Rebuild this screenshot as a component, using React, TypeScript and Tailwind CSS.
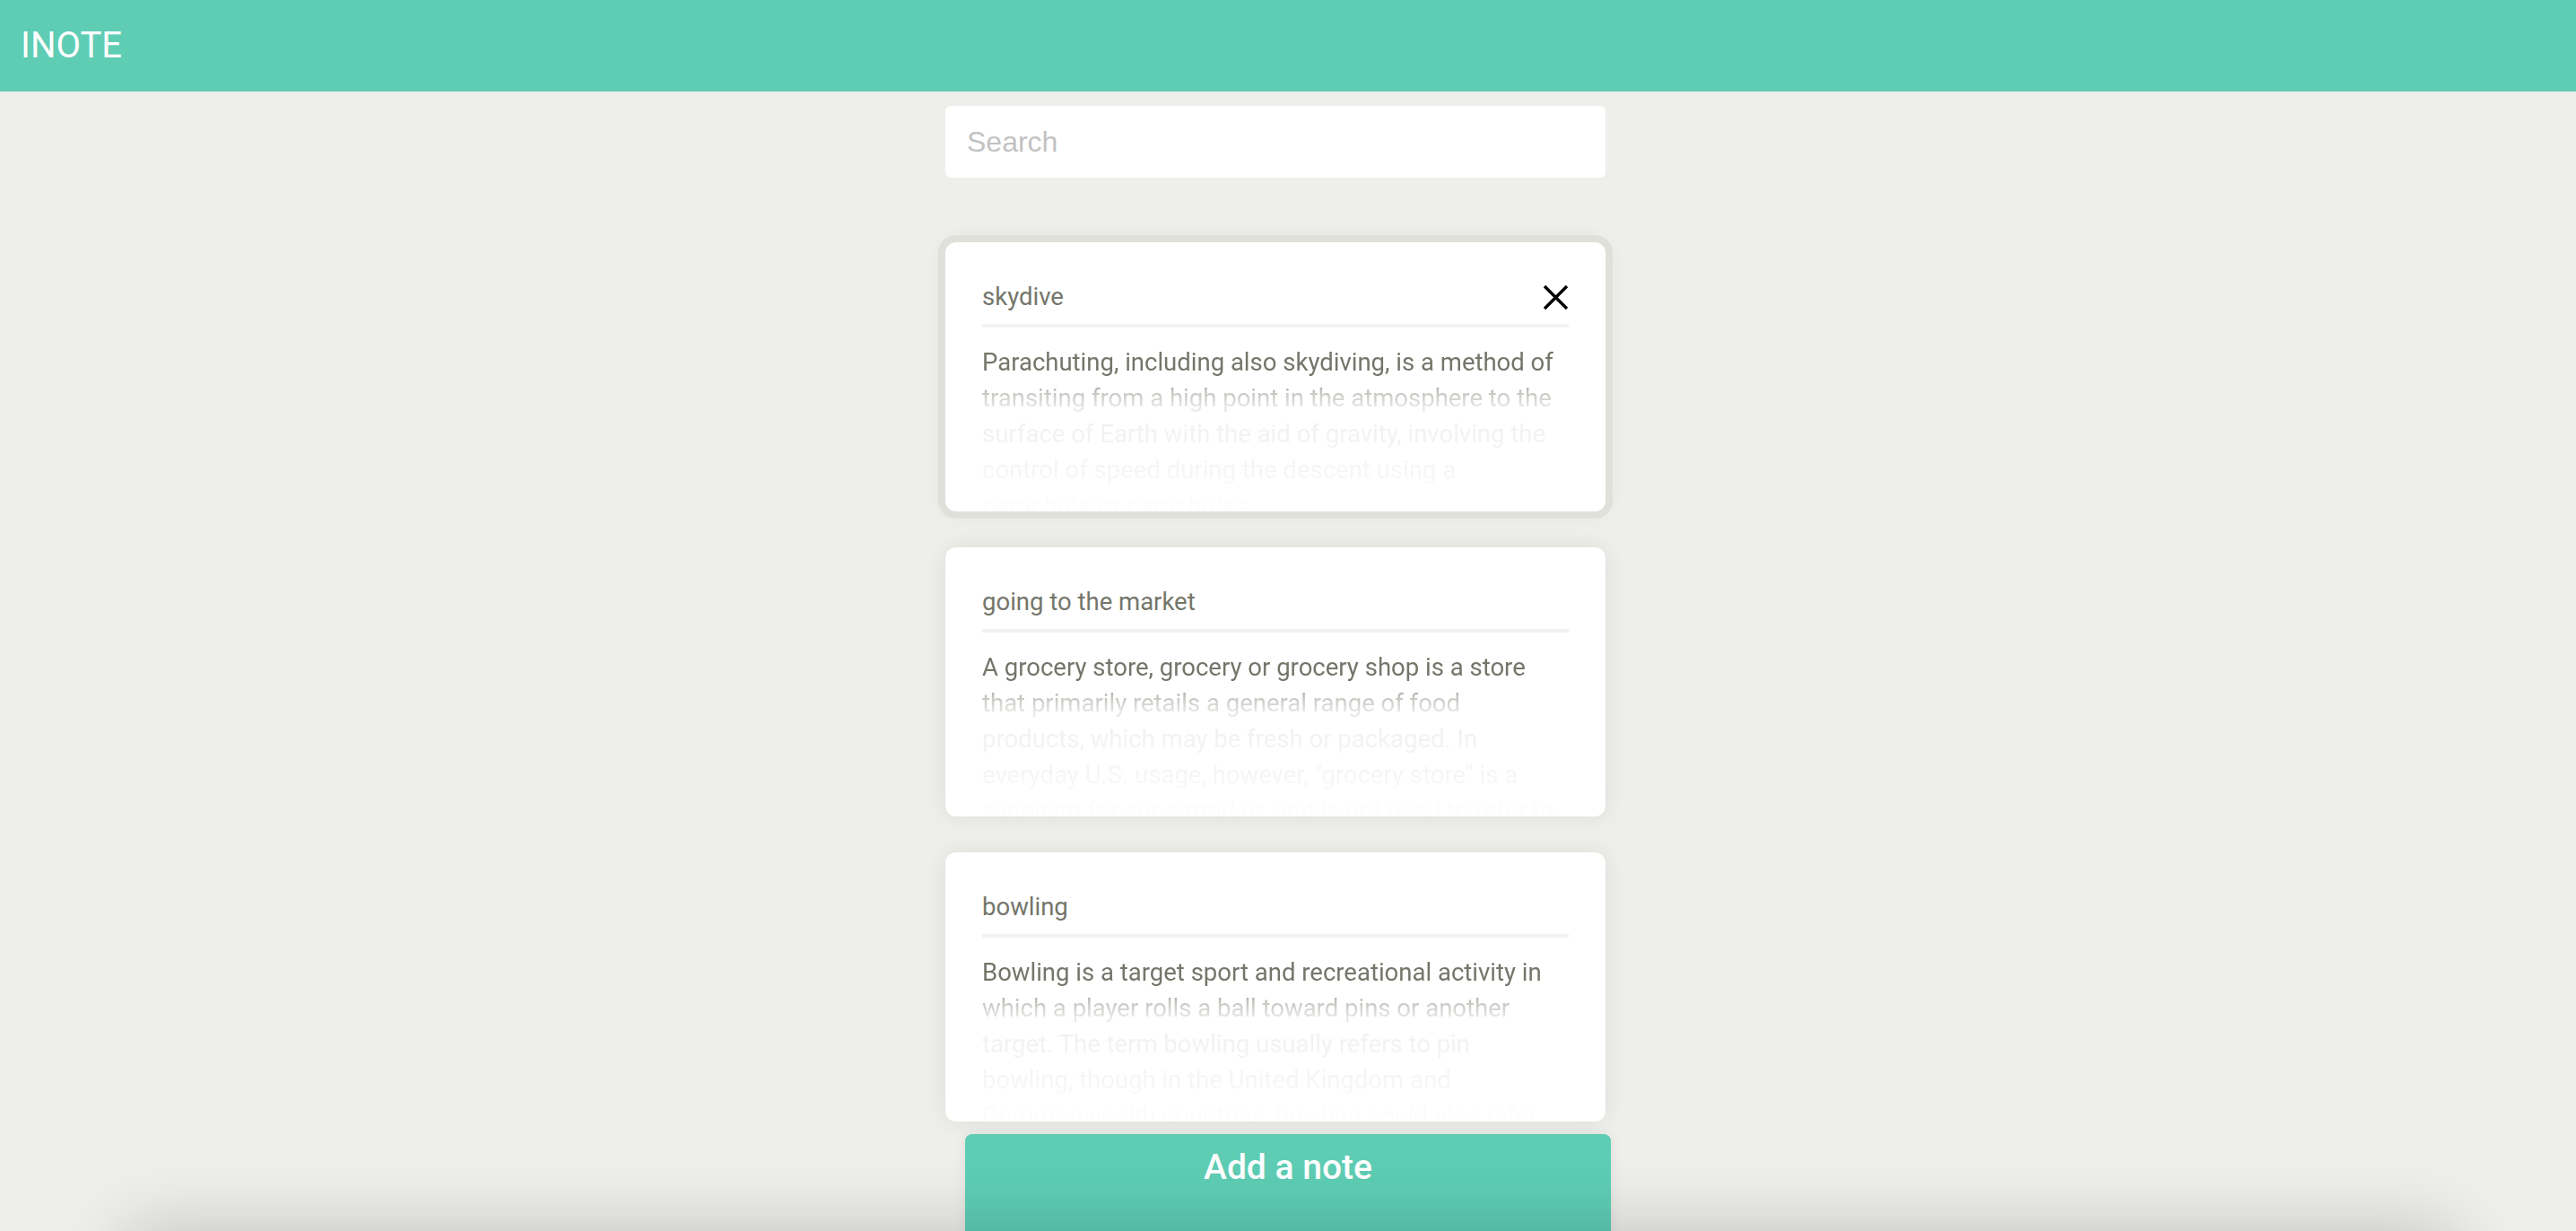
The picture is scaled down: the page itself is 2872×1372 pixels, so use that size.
import { useState } from "react";

interface Note {
  title: string;
  lines: string[];
}

const notes: Note[] = [
  {
    title: "skydive",
    lines: [
      "Parachuting, including also skydiving, is a method of",
      "transiting from a high point in the atmosphere to the",
      "surface of Earth with the aid of gravity, involving the",
      "control of speed during the descent using a",
      "parachute or parachutes.",
    ],
  },
  {
    title: "going to the market",
    lines: [
      "A grocery store, grocery or grocery shop is a store",
      "that primarily retails a general range of food",
      "products, which may be fresh or packaged. In",
      'everyday U.S. usage, however, "grocery store" is a',
      "synonym for supermarket, and is not used to refer to",
    ],
  },
  {
    title: "bowling",
    lines: [
      "Bowling is a target sport and recreational activity in",
      "which a player rolls a ball toward pins or another",
      "target. The term bowling usually refers to pin",
      "bowling, though in the United Kingdom and",
      "Commonwealth countries, bowling could also refer",
    ],
  },
];

function CloseIcon() {
  return (
    <svg width="29" height="29" viewBox="0 0 29 29" fill="none" stroke="#000" strokeWidth="3.4">
      <path d="M2 2 L27 27 M27 2 L2 27" />
    </svg>
  );
}

function NoteCard({ note, active }: { note: Note; active: boolean }) {
  return (
    <div
      className={
        active
          ? "h-[300px] overflow-hidden rounded-[12px] bg-white px-[41px] pt-[41px] ring-8 ring-[#dfe0da] shadow-[0_0_24px_rgba(0,0,0,0.08)]"
          : "h-[300px] overflow-hidden rounded-[12px] bg-white px-[41px] pt-[41px] shadow-[0_0_24px_rgba(0,0,0,0.08)]"
      }
    >
      {/* TITLE ROW */}
      <div className="flex h-[40px] items-center justify-between">
        <span className="text-[27.5px] leading-[40px] text-[#74766a]">{note.title}</span>
        {active && <CloseIcon />}
      </div>
      <div className="mt-[10px] h-[4px] bg-[#f2f2f1]" />

      {/* BODY, faded out below the first line */}
      <div className="mt-[19px] text-[27.5px] leading-[40px] text-[#74766a] [mask-image:linear-gradient(to_bottom,black_38px,rgba(0,0,0,0.45)_51px,rgba(0,0,0,0.18)_69px,rgba(0,0,0,0.1)_82px,rgba(0,0,0,0.085)_110px,rgba(0,0,0,0.065)_140px,rgba(0,0,0,0.03)_165px,rgba(0,0,0,0.01)_186px)]">
        {note.lines.map((line) => (
          <div key={line} className="whitespace-nowrap">
            {line}
          </div>
        ))}
      </div>
    </div>
  );
}

export default function App() {
  const [query, setQuery] = useState("");

  return (
    <div className="relative h-screen overflow-hidden bg-[#eeefea] font-['Roboto',sans-serif]">
      {/* HEADER */}
      <header className="flex h-[102px] items-center bg-[#5ecdb4] px-[23px]">
        <span className="text-[40px] font-normal leading-none text-white">INOTE</span>
      </header>

      {/* NOTES COLUMN */}
      <div className="mx-auto w-[764px] pr-[28px]">
        <input
          value={query}
          onChange={(e) => setQuery(e.target.value)}
          placeholder="Search"
          className="mt-[16px] block h-[80px] w-[736px] rounded-[6px] bg-white pl-[24px] font-['Liberation_Sans',Arial,sans-serif] text-[32px] text-[#555] outline-none placeholder:text-[#c2c2c2]"
        />

        <div className="mt-[72px] flex flex-col gap-[40px]">
          {notes.map((note, i) => (
            <NoteCard key={note.title} note={note} active={i === 0} />
          ))}
        </div>
      </div>

      <button className="mx-auto mt-[14px] flex h-[130px] w-[720px] flex-col items-center justify-start rounded-t-[8px] bg-[#5ecdb4] pt-[14px] text-[39px] font-medium leading-[46px] text-white shadow-[0_0_14px_rgba(0,0,0,0.08)]">
        <span>Add a note</span>
      </button>

      <div className="pointer-events-none absolute left-[140px] right-[135px] top-full z-10 h-[200px] shadow-[0_0_80px_rgba(0,0,0,0.2)]" />
    </div>
  );
}
